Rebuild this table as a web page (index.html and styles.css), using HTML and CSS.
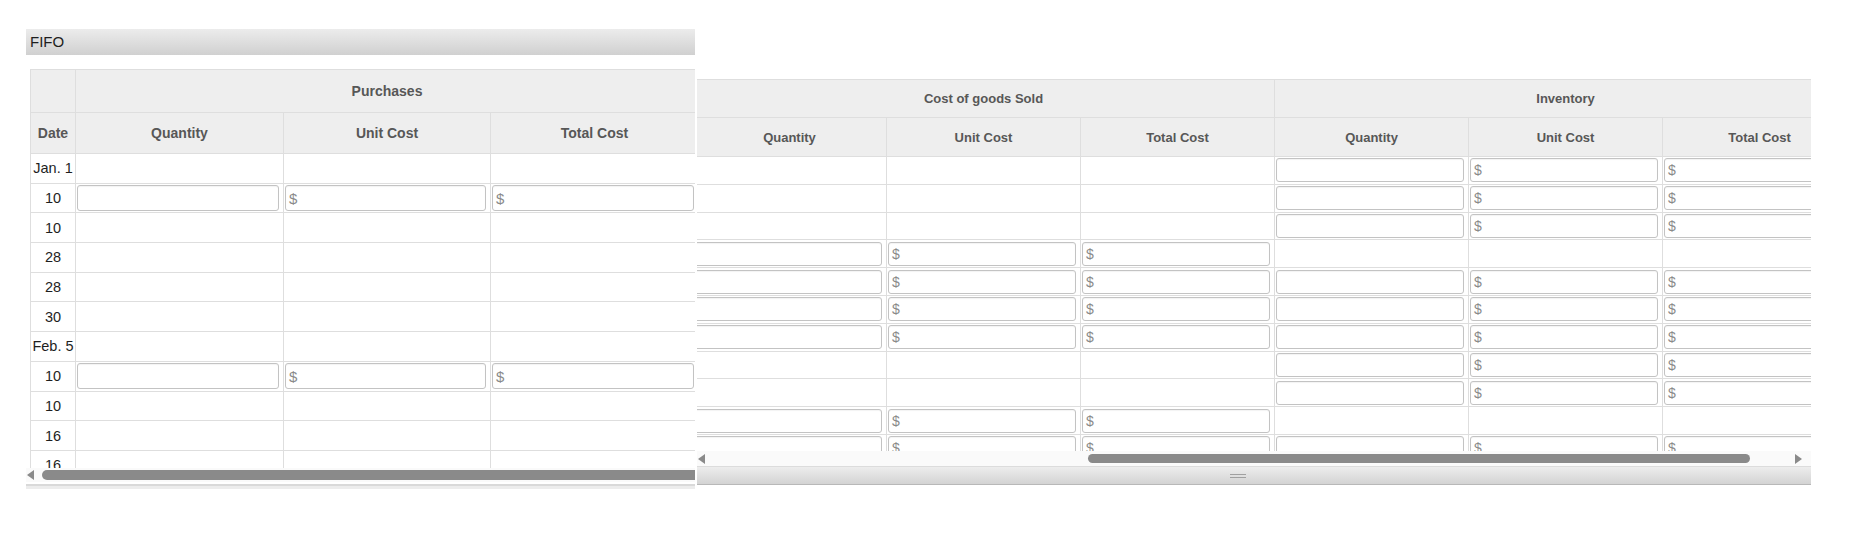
FILE: index.html
```html
<!DOCTYPE html>
<html>
<head>
<meta charset="utf-8">
<link rel="stylesheet" href="styles.css">
</head>
<body>
<div class="page">
  <section class="panel-left">
    <div class="titlebar">FIFO</div>
    <div class="view-left">
      <table class="grid grid-left">
        <colgroup><col class="c-date"><col class="c-l1"><col class="c-l2"><col class="c-l3"></colgroup>
        <thead>
          <tr class="grp"><th></th><th colspan="3">Purchases</th></tr>
          <tr class="cols"><th>Date</th><th>Quantity</th><th>Unit Cost</th><th>Total Cost</th></tr>
        </thead>
        <tbody>
          <tr><td class="date">Jan. 1</td><td></td><td></td><td></td></tr>
          <tr><td class="date">10</td><td><label class="fld"><input type="text"></label></td><td><label class="fld"><span>$</span><input type="text"></label></td><td><label class="fld"><span>$</span><input type="text"></label></td></tr>
          <tr><td class="date">10</td><td></td><td></td><td></td></tr>
          <tr><td class="date">28</td><td></td><td></td><td></td></tr>
          <tr><td class="date">28</td><td></td><td></td><td></td></tr>
          <tr><td class="date">30</td><td></td><td></td><td></td></tr>
          <tr><td class="date">Feb. 5</td><td></td><td></td><td></td></tr>
          <tr><td class="date">10</td><td><label class="fld"><input type="text"></label></td><td><label class="fld"><span>$</span><input type="text"></label></td><td><label class="fld"><span>$</span><input type="text"></label></td></tr>
          <tr><td class="date">10</td><td></td><td></td><td></td></tr>
          <tr><td class="date">16</td><td></td><td></td><td></td></tr>
          <tr><td class="date">16</td><td></td><td></td><td></td></tr>
        </tbody>
      </table>
    </div>
    <div class="sb sb-left"><span class="arr-l"></span><span class="thumb thumb-left"></span></div>
    <div class="bottom-line"></div>
  </section>

  <section class="panel-right">
    <div class="view-right">
      <table class="grid grid-right">
        <colgroup><col class="c-r"><col class="c-r"><col class="c-r"><col class="c-r"><col class="c-r"><col class="c-r"></colgroup>
        <thead>
          <tr class="grp"><th colspan="3">Cost of goods Sold</th><th colspan="3">Inventory</th></tr>
          <tr class="cols"><th>Quantity</th><th>Unit Cost</th><th>Total Cost</th><th>Quantity</th><th>Unit Cost</th><th>Total Cost</th></tr>
        </thead>
        <tbody>
          <tr><td></td><td></td><td></td><td><label class="fld"><input type="text"></label></td><td><label class="fld"><span>$</span><input type="text"></label></td><td><label class="fld"><span>$</span><input type="text"></label></td></tr>
          <tr><td></td><td></td><td></td><td><label class="fld"><input type="text"></label></td><td><label class="fld"><span>$</span><input type="text"></label></td><td><label class="fld"><span>$</span><input type="text"></label></td></tr>
          <tr><td></td><td></td><td></td><td><label class="fld"><input type="text"></label></td><td><label class="fld"><span>$</span><input type="text"></label></td><td><label class="fld"><span>$</span><input type="text"></label></td></tr>
          <tr><td><label class="fld"><input type="text"></label></td><td><label class="fld"><span>$</span><input type="text"></label></td><td><label class="fld"><span>$</span><input type="text"></label></td><td></td><td></td><td></td></tr>
          <tr><td><label class="fld"><input type="text"></label></td><td><label class="fld"><span>$</span><input type="text"></label></td><td><label class="fld"><span>$</span><input type="text"></label></td><td><label class="fld"><input type="text"></label></td><td><label class="fld"><span>$</span><input type="text"></label></td><td><label class="fld"><span>$</span><input type="text"></label></td></tr>
          <tr><td><label class="fld"><input type="text"></label></td><td><label class="fld"><span>$</span><input type="text"></label></td><td><label class="fld"><span>$</span><input type="text"></label></td><td><label class="fld"><input type="text"></label></td><td><label class="fld"><span>$</span><input type="text"></label></td><td><label class="fld"><span>$</span><input type="text"></label></td></tr>
          <tr><td><label class="fld"><input type="text"></label></td><td><label class="fld"><span>$</span><input type="text"></label></td><td><label class="fld"><span>$</span><input type="text"></label></td><td><label class="fld"><input type="text"></label></td><td><label class="fld"><span>$</span><input type="text"></label></td><td><label class="fld"><span>$</span><input type="text"></label></td></tr>
          <tr><td></td><td></td><td></td><td><label class="fld"><input type="text"></label></td><td><label class="fld"><span>$</span><input type="text"></label></td><td><label class="fld"><span>$</span><input type="text"></label></td></tr>
          <tr><td></td><td></td><td></td><td><label class="fld"><input type="text"></label></td><td><label class="fld"><span>$</span><input type="text"></label></td><td><label class="fld"><span>$</span><input type="text"></label></td></tr>
          <tr><td><label class="fld"><input type="text"></label></td><td><label class="fld"><span>$</span><input type="text"></label></td><td><label class="fld"><span>$</span><input type="text"></label></td><td></td><td></td><td></td></tr>
          <tr><td><label class="fld"><input type="text"></label></td><td><label class="fld"><span>$</span><input type="text"></label></td><td><label class="fld"><span>$</span><input type="text"></label></td><td><label class="fld"><input type="text"></label></td><td><label class="fld"><span>$</span><input type="text"></label></td><td><label class="fld"><span>$</span><input type="text"></label></td></tr>
        </tbody>
      </table>
    </div>
    <div class="sb sb-right"><span class="arr-l"></span><span class="thumb thumb-right"></span><span class="arr-r"></span></div>
    <div class="resize"><span class="grip"></span></div>
  </section>
</div>
</body>
</html>
```

FILE: styles.css
```css
html, body {
  margin: 0;
  padding: 0;
  background: #fff;
}
body {
  font-family: "Liberation Sans", Arial, Helvetica, sans-serif;
  color: #222;
}
.page {
  display: flex;
  align-items: flex-start;
  padding: 29px 0 0 26px;
}

/* ---------- left panel ---------- */
.panel-left {
  width: 669px;
  flex: none;
}
.titlebar {
  height: 26px;
  line-height: 25px;
  padding-left: 4px;
  font-size: 15px;
  color: #1e1e1e;
  background: linear-gradient(#ececec, #d0d0d0);
}
.view-left {
  margin-top: 14px;
  padding-left: 4px;
  height: 399px;
  overflow: hidden;
}

.grid {
  border-collapse: collapse;
  table-layout: fixed;
}
.grid th, .grid td {
  border: 1px solid #dedede;
  padding: 0;
}
.grid th {
  background: #eeeeee;
  color: #575757;
  font-weight: bold;
  text-align: center;
  vertical-align: middle;
}

.grid-left {
  width: 668px;
}
.grid-left .c-date { width: 45px; }
.grid-left .c-l1 { width: 208px; }
.grid-left .c-l2 { width: 207px; }
.grid-left .c-l3 { width: 208px; }
.grid-left th { font-size: 14px; }
.grid-left tr.grp { height: 43px; }
.grid-left tr.cols { height: 41px; }
.grid-left tbody tr { height: 29.7px; }
.grid-left td {
  padding: 0 4px 0 1px;
  vertical-align: middle;
}
.grid-left td.date {
  padding: 0;
  text-align: center;
  font-size: 14.5px;
  color: #1e1e1e;
  white-space: nowrap;
}

/* input fields */
.fld {
  display: flex;
  align-items: center;
  box-sizing: border-box;
  width: 100%;
  height: 26px;
  border: 1px solid #c3c3c3;
  border-radius: 3px;
  background: #fff;
  box-shadow: inset 0 1px 1px rgba(0, 0, 0, 0.05);
}
.fld span {
  color: #8a8a8a;
  font-size: 15px;
  padding-left: 3px;
}
.fld input {
  flex: 1;
  min-width: 0;
  border: 0;
  outline: 0;
  padding: 0;
  background: transparent;
  font: inherit;
}

/* scrollbars */
.sb {
  display: flex;
  align-items: center;
  background: #fafafa;
}
.sb-left {
  height: 14px;
}
.arr-l {
  width: 0;
  height: 0;
  margin-left: 1px;
  border-right: 7px solid #8a8a8a;
  border-top: 5px solid transparent;
  border-bottom: 5px solid transparent;
  flex: none;
}
.arr-r {
  width: 0;
  height: 0;
  margin-left: auto;
  margin-right: 9px;
  border-left: 7px solid #8a8a8a;
  border-top: 5px solid transparent;
  border-bottom: 5px solid transparent;
  flex: none;
}
.thumb {
  background: #8a8a8a;
  flex: none;
}
.thumb-left {
  flex: 1;
  height: 10px;
  margin-left: 8px;
  border-radius: 5px 0 0 5px;
}
.bottom-line {
  margin-top: 2px;
  height: 5px;
  background: linear-gradient(#d9d9d9 0, #d9d9d9 2px, #ececec 2px, #ececec 5px);
}

/* ---------- right panel ---------- */
.panel-right {
  width: 1114px;
  flex: none;
  margin: 50px 0 0 2px;
}
.view-right {
  height: 372px;
  overflow: hidden;
}
.grid-right {
  width: 1165px;
  margin-left: -5px;
}
.grid-right .c-r { width: 194px; }
.grid-right th { font-size: 13px; }
.grid-right tr.grp { height: 38px; }
.grid-right tr.cols { height: 39px; }
.grid-right tbody tr { height: 27.8px; }
.grid-right td {
  padding: 0 4px 0 1px;
  vertical-align: middle;
}
.grid-right .fld {
  height: 24px;
}
.grid-right .fld span {
  font-size: 14px;
}

.sb-right {
  height: 15px;
  border-bottom: 1px solid #dcdcdc;
}
.thumb-right {
  width: 662px;
  height: 9px;
  margin-left: 383px;
  border-radius: 5px;
}
.resize {
  height: 17px;
  border-bottom: 1px solid #b8b8b8;
  background: linear-gradient(#ededed, #d3d3d3);
  display: flex;
  align-items: center;
  justify-content: center;
  padding-right: 32px;
}
.grip {
  width: 16px;
  height: 2px;
  border-top: 1px solid #a0a0a0;
  border-bottom: 1px solid #a0a0a0;
}
```
